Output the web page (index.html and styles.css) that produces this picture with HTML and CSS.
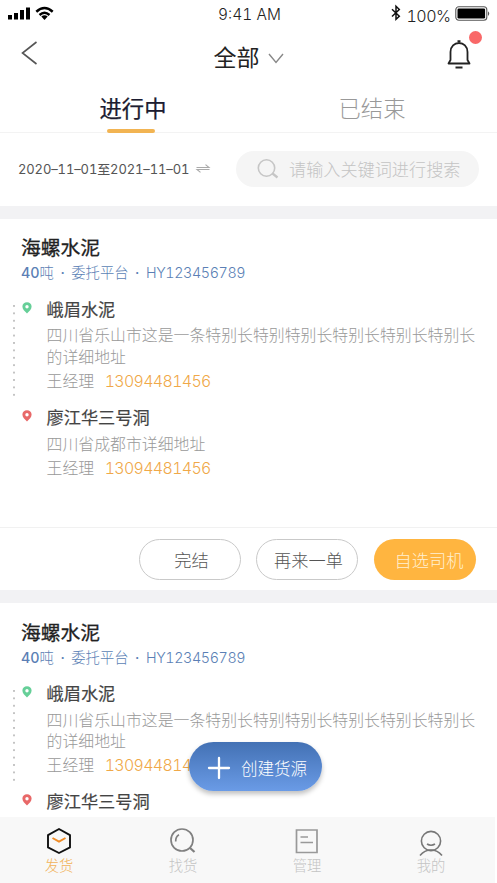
FILE: index.html
```html
<!DOCTYPE html>
<html lang="zh-CN">
<head>
<meta charset="utf-8">
<title>全部</title>
<link rel="stylesheet" href="styles.css">
</head>
<body>
<svg width="0" height="0" class="defs">
  <symbol id="pin" viewBox="0 0 10 12"><path fill-rule="evenodd" d="M5 .3C2.3.3.4 2.200.4 4.600.4 7.300 2.700 9.500 5 11.500 7.300 9.500 9.600 7.300 9.600 4.600 9.600 2.200 7.700.3 5 .3ZM5 3a1.700 1.700 0 1 1 0 3.400A1.700 1.700 0 0 1 5 3Z" fill="currentColor"/></symbol>
</svg>
<div class="screen">
  <div class="status">
    <svg class="signal" width="48" height="16" viewBox="0 0 48 16">
      <path d="M0 9h4v4.500H0zM6 7h4v6.500H6zM12 4h4v9.500h-4zM18 1.500h4v12h-4z"/>
      <g fill="none" stroke="#000" stroke-width="2.500"><path d="M28.300 5.700Q36.500-1.700 44.700 5.700"/><path d="M31.500 9Q36.500 4.500 41.500 9"/></g>
      <path d="M33.300 10.600Q36.500 8 39.700 10.600L36.500 14Z"/>
    </svg>
    <span class="time">9:41 AM</span>
    <div class="power">
      <svg width="10" height="16" viewBox="0 0 10 16"><path d="M1 4.300 8.300 11.300 5 14.300V1.300L8.300 4.500 1 11.500" fill="none" stroke="#111" stroke-width="1.500"/></svg>
      <span>100%</span>
      <svg width="36" height="16" viewBox="0 0 36 16"><rect x=".8" y=".8" width="31" height="13.500" rx="3" fill="none" stroke="#555" stroke-width="1.100"/><rect x="2.500" y="2.500" width="27.600" height="10.100" rx="1.300"/><path d="M33 5.200q2.500 2.300 0 4.700z" fill="#555"/></svg>
    </div>
  </div>

  <header class="header">
    <svg class="back" width="17" height="24" viewBox="0 0 17 24"><path d="M15.500 1 1.500 12l14 11" fill="none" stroke="#555" stroke-width="1.600"/></svg>
    <h1>全部<svg width="16" height="11" viewBox="0 0 16 11"><path d="M1 1l7 8.500L15 1" fill="none" stroke="#888" stroke-width="1.400"/></svg></h1>
    <div class="bell">
      <svg width="24" height="29" viewBox="0 0 24 29"><g fill="none" stroke="#222" stroke-width="1.800" stroke-linejoin="round"><path d="M1.500 23.500h21l-2-3.500v-8C20.500 6.500 16.500 3 12 3s-8.500 3.500-8.500 9v8Z"/><path d="M10.500 1.200h3M8.500 27.500h7"/></g></svg>
      <i class="badge"></i>
    </div>
  </header>

  <nav class="tabs">
    <span class="tab active">进行中</span>
    <span class="tab">已结束</span>
  </nav>

  <div class="filter">
    <span class="dates">2020–11–01至2021–11–01</span>
    <svg class="swap" width="14" height="9" viewBox="0 0 14 9"><path d="M.5 3.500h12.500L9.500.6M13.500 5.500H1l3.500 2.900" fill="none" stroke="#aaa" stroke-width="1.100"/></svg>
    <div class="search">
      <svg width="22" height="20" viewBox="0 0 22 20"><circle cx="9.500" cy="9" r="8.200" fill="none" stroke="#c6c6c6" stroke-width="1.600"/><path d="M15.500 14.500 20.500 18.500" stroke="#c6c6c6" stroke-width="2.300"/></svg>
      <span>请输入关键词进行搜索</span>
    </div>
  </div>

  <main class="list">
    <article class="card">
      <h2>海螺水泥</h2>
      <p class="meta"><b>40</b>吨<i>·</i>委托平台<i>·</i><span class="code">HY123456789</span></p>
      <div class="route">
        <div class="dots"></div>
        <div class="stops">
          <section class="stop">
            <svg class="pin from" width="10" height="12"><use href="#pin"/></svg>
            <div>
              <h3>峨眉水泥</h3>
              <p class="address">四川省乐山市这是一条特别长特别特别长特别长特别长特别长的详细地址</p>
              <p class="contact">王经理<a>13094481456</a></p>
            </div>
          </section>
          <section class="stop">
            <svg class="pin to" width="10" height="12"><use href="#pin"/></svg>
            <div>
              <h3>廖江华三号洞</h3>
              <p class="address">四川省成都市详细地址</p>
              <p class="contact">王经理<a>13094481456</a></p>
            </div>
          </section>
        </div>
      </div>
      <footer class="actions">
        <button>完结</button>
        <button>再来一单</button>
        <button class="primary">自选司机</button>
      </footer>
    </article>

    <article class="card">
      <h2>海螺水泥</h2>
      <p class="meta"><b>40</b>吨<i>·</i>委托平台<i>·</i><span class="code">HY123456789</span></p>
      <div class="route">
        <div class="dots"></div>
        <div class="stops">
          <section class="stop">
            <svg class="pin from" width="10" height="12"><use href="#pin"/></svg>
            <div>
              <h3>峨眉水泥</h3>
              <p class="address">四川省乐山市这是一条特别长特别特别长特别长特别长特别长的详细地址</p>
              <p class="contact">王经理<a>13094481456</a></p>
            </div>
          </section>
          <section class="stop">
            <svg class="pin to" width="10" height="12"><use href="#pin"/></svg>
            <div>
              <h3>廖江华三号洞</h3>
            </div>
          </section>
        </div>
      </div>
    </article>
  </main>

  <button class="create">
    <svg width="22" height="22" viewBox="0 0 22 22"><path d="M11 1v20M1 11h20" stroke="#fff" stroke-width="2.300" stroke-linecap="round"/></svg>
    <span>创建货源</span>
  </button>

  <nav class="tabbar">
    <a class="current">
      <svg width="26" height="28" viewBox="0 0 26 28"><path d="M13 2 24 8.200v12.200L13 26 2 20.400V8.200Z" fill="none" stroke="#111" stroke-width="1.900" stroke-linejoin="round"/><path d="M6.500 11 13 14.700 19.500 11" fill="none" stroke="#f08c26" stroke-width="1.900"/></svg>
      <span>发货</span>
    </a>
    <a>
      <svg width="26" height="28" viewBox="0 0 26 28"><g fill="none" stroke="#808080" stroke-width="1.700"><circle cx="12" cy="13" r="11"/><path d="M5.700 14.500Q5.500 9.500 9 7.700"/><path d="M19.500 20.500 24.500 25" stroke-width="2.300"/></g></svg>
      <span>找货</span>
    </a>
    <a>
      <svg width="26" height="28" viewBox="0 0 26 28"><g fill="none" stroke="#999" stroke-width="1.700"><path d="M2.500 3h20.500v22.500H2.500Z"/><path d="M6.500 10H14M6.500 15.500H19"/></g></svg>
      <span>管理</span>
    </a>
    <a>
      <svg width="26" height="28" viewBox="0 0 26 28"><g fill="none" stroke="#777" stroke-width="1.600"><circle cx="13" cy="14" r="9.600"/><path d="M9 17q4 2.600 8 0M2 28.500Q6.500 23 13 23t11 5.500"/></g></svg>
      <span>我的</span>
    </a>
  </nav>
</div>
</body>
</html>
```
FILE: styles.css
```css
* { box-sizing: border-box; margin: 0; padding: 0; }
body {
  background: #fff;
  font-family: Inter, "Noto Sans CJK SC", sans-serif;
  font-weight: 300;
  font-variant-numeric: tabular-nums;
  color: #333;
  overflow: hidden;
}
.defs { position: absolute; }
i { font-style: normal; }
h1, h2, h3 { font-weight: 400; }
button { font: inherit; border: 0; background: none; }
svg { display: block; flex: none; overflow: visible; }

.screen { position: relative; width: 497px; height: 883px; overflow: hidden; display: flex; flex-direction: column; }

.status { flex: none; height: 28px; display: grid; grid-template-columns: 1fr auto 1fr; align-items: center; padding: 0 6px 0 8px; color: #222; }
.signal { margin-top: -1px; }
.time { font-size: 15.500px; letter-spacing: 0; }
.power { display: flex; justify-content: flex-end; align-items: center; font-size: 16px; letter-spacing: -.5px; }
.power svg:first-child { margin: -2px 5px 0 0; }
.power svg:last-child { margin-left: 4.500px; }
.power span { padding-top: 4px; }

.header { flex: none; height: 57px; display: grid; grid-template-columns: 1fr auto 1fr; align-items: center; padding: 0 15px 0 21px; }
.back { margin-top: -8px; }
.header h1 { display: flex; align-items: center; gap: 8px; font-size: 23px; line-height: 30px; color: #222; margin: 2px 3px 0 -3px; }
.header h1 svg { margin-top: 1px; }
.bell { position: relative; justify-self: end; margin: -4px 11px 0 0; }
.badge { position: absolute; left: 22px; top: -9px; width: 13px; height: 13px; border-radius: 50%; background: #f96868; }

.tabs { flex: none; height: 48px; display: flex; border-bottom: 1px solid #f3f3f3; }
.tab { position: relative; width: 224px; margin-left: 21px; text-align: center; font-size: 22.300px; line-height: 47px; color: #999; }
.tab + .tab { margin-left: 15px; }
.active { color: #1c1c30; font-weight: 400; -webkit-text-stroke: .25px; }
.active::after { content: ""; position: absolute; left: 86px; bottom: -1px; width: 48px; height: 4px; border-radius: 2px; background: #f2b452; }

.filter { flex: none; height: 73px; display: flex; align-items: center; padding: 0 18px 2px 18px; }
.dates { font-size: 13px; font-weight: 400; letter-spacing: -.12px; color: #555; white-space: nowrap; width: 171px; }
.swap { margin-left: 7px; }
.search { width: 243px; height: 36px; margin-left: auto; border-radius: 18px; background: #f5f5f5; display: flex; align-items: center; padding-left: 20.500px; gap: 10.500px; font-size: 17.150px; color: #c4c4c4; white-space: nowrap; }

.list { flex: 1; min-height: 0; overflow: hidden; background: #f2f2f4; padding-top: 12.500px; display: flex; flex-direction: column; gap: 13px; }
.card { flex: none; height: 371.500px; background: #fff; padding: 16.500px 0 0 21px; display: flex; flex-direction: column; }
.card h2 { font-size: 19.800px; line-height: 26px; color: #222; -webkit-text-stroke: .3px; }
.meta { display: flex; font-size: 14.300px; line-height: 24px; color: #5b7fb5; }
.meta b { font-weight: 500; }
.meta i { width: 17.500px; text-align: center; font-weight: 500; }
.code { letter-spacing: -.38px; }

.route { display: flex; margin: 12.500px 0 0 -8px; }
.dots { flex: none; width: 2px; height: 91px; margin: 7.500px 7px 0 0; background: radial-gradient(circle at 1px 1px, #c4c4c4 .8px, transparent 1.300px) 0 0 / 2px 7.420px; }
.stops { display: flex; flex-direction: column; gap: 12px; }
.stop { display: grid; grid-template-columns: 24.500px 440px; }
.pin { margin-top: 4px; }
.from { color: #66cf98; }
.to { color: #e86868; }
.stop h3 { font-size: 17.200px; line-height: 24px; color: #444; -webkit-text-stroke: .2px; }
.address { margin-top: 3.500px; font-size: 15.880px; line-height: 21.700px; color: #999; width: 432px; }
.stop + .stop .address { margin-top: 4.300px; }
.contact { display: flex; font-size: 15.880px; line-height: 24px; color: #999; margin-top: 1.300px; }
.contact a { margin-left: 10.500px; letter-spacing: -.63px; color: #f0a848; }

.actions { margin: auto 0 0 -21px; height: 63px; border-top: 1px solid #f1f1f1; padding: 11px 21px 0 0; display: flex; justify-content: flex-end; gap: 15px; }
.actions button { width: 102px; height: 41px; border: 1px solid #c9c9c9; border-radius: 21px; font-size: 17.200px; color: #555; padding-left: 3px; white-space: nowrap; }
.actions .primary { margin-left: 1px; border: 0; background: #ffb540; color: #fff0d2; padding-left: 8px; }

.create { position: absolute; left: 188.500px; top: 741.500px; width: 133px; height: 49px; border-radius: 25px; background: linear-gradient(#4371b4, #6a9be6); box-shadow: 0 3px 5px rgba(0, 0, 0, .25); display: flex; align-items: center; padding: 4px 0 0 19px; gap: 11.500px; font-size: 16.500px; color: #fff; white-space: nowrap; }

.tabbar { flex: none; width: 495px; height: 66px; background: #f8f8f8; display: flex; justify-content: space-between; padding: 10px 49px 0 44px; }
.tabbar a { width: 30px; display: flex; flex-direction: column; align-items: center; font-size: 14.300px; line-height: 22px; color: #c4c4c4; white-space: nowrap; }
.tabbar .current { color: #f2b35a; }
```
